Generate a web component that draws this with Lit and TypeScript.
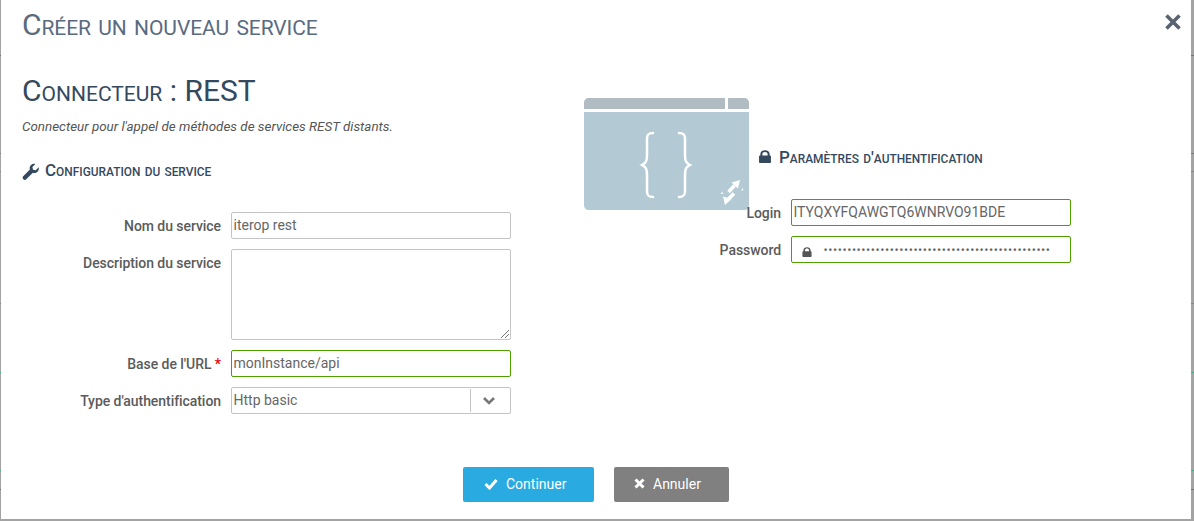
import { LitElement, html, css, svg } from "lit";
import { customElement } from "lit/decorators.js";

const lockIcon = (c: string, w: number, h: number) => svg`<svg width=${w} height=${h} viewBox="0 0 11 12"><path fill=${c} d="M1.2 5V3.8C1.2 1.6 3 .2 5.5.2s4.3 1.4 4.3 3.6V5h.2c.6 0 1 .4 1 1v5c0 .6-.4 1-1 1H1c-.6 0-1-.4-1-1V6c0-.6.4-1 1-1zm1.9 0h4.800V3.8c0-1.200-1-2-2.400-2s-2.400.8-2.400 2z"/></svg>`;

/* Synthesised small caps: lower-case runs are uppercased at 70% of the size. */
const sc = (t: string) =>
  t.split(/([^A-ZÀ-Ý :']+)/).map((part, i) => (i % 2 ? html`<span class="sm">${part}</span>` : part));

@customElement("app-root")
export class AppRoot extends LitElement {
  static styles = css`
    :host { display: block; width: 1194px; height: 521px; overflow: hidden; font-family: Roboto, "Liberation Sans", sans-serif; box-sizing: border-box; padding: 0 3px 2px 1px;
      background: linear-gradient(#a3a3a3 55px, #5d7a8a 55px, #5d7a8a 56px, #a3a3a3 56px, #a3a3a3 153px, #4f86a8 153px, #4f86a8 154px, #a3a3a3 154px, #a3a3a3 171px, #5f9a8a 171px, #5f9a8a 172px, #a3a3a3 172px, #a3a3a3 303px, #5f9a8a 303px, #5f9a8a 304px, #a3a3a3 304px, #a3a3a3 372px, #4fa58a 372px, #4fa58a 373px, #a3a3a3 373px, #a3a3a3 470px, #4fa58a 470px, #4fa58a 471px, #a3a3a3 471px, #a3a3a3 489px, #a05a6a 489px, #a05a6a 490px, #a3a3a3 490px); }
    * { box-sizing: border-box; }
    .sm { font-size: 70%; text-transform: uppercase; }
    .modal { position: relative; height: 519px; background: #fff; display: flex; flex-direction: column; }
    .close { position: absolute; right: 9px; top: 13px; width: 18px; height: 18px; display: block; }
    h1 { margin: 0; padding: 7px 0 0 21px; height: 68px; font-weight: 400; font-size: 30px; line-height: 36px; color: #5a6b80; letter-spacing: -.08px; }
    .cols { flex: 1; display: flex; }
    .left { width: 583px; padding-left: 21px; }
    .right { position: relative; flex: 1; }
    h2 { margin: 0; height: 46px; font-weight: 400; font-size: 30px; line-height: 46px; color: #34495e; }
    .desc { margin: 5px 0 0; font-size: 13.4px; line-height: 16px; font-style: italic; color: #555; }
    h3 { margin: 0; font-size: 17px; line-height: 20px; font-weight: 500; color: #34495e; display: flex; align-items: center; }
    .cfg { margin-top: 25px; gap: 6px; }
    .rows { margin-top: 30px; margin-left: -21px; display: grid; grid-template-columns: 220px 280px; column-gap: 10px; row-gap: 10px; }
    label { text-align: right; font-size: 14px; font-weight: 500; color: #5b5b5b; line-height: 28px; height: 27px; white-space: nowrap; letter-spacing: -.06px; }
    .req { color: #e00; }
    .field { height: 27px; border: 1px solid #c4c4c4; border-radius: 2px; padding: 0 1.5px; font-size: 14px; line-height: 25px; color: #666; background: #fff; }
    .ok { border-color: #4e9f00; }
    .area { height: 91px; position: relative; }
    .grip { position: absolute; right: 0; bottom: 0; }
    .sel { display: flex; padding-right: 0; }
    .sel span:first-child { flex: 1; }
    .arrow { width: 40px; margin: 1px 0; border-left: 1px solid #c4c4c4; padding-right: 4px; display: flex; align-items: center; justify-content: center; }
    .logo { position: absolute; left: 0; top: 30px; }
    .auth { padding: 79px 0 0 175px; gap: 8px; height: 131px; align-items: flex-start; }
    .auth svg { margin-top: 3px; }
    .rows2 { margin: 0; display: grid; grid-template-columns: 197px 280px; column-gap: 10px; row-gap: 10px; position: relative; }
    .pw { display: flex; align-items: center; padding-left: 10px; gap: 12px; }
    .pw svg { margin-top: 4px; }
    .dots { font-size: 9px; letter-spacing: 1.58px; line-height: 20px; color: #666; font-family: "Liberation Sans", sans-serif; font-weight: 700; white-space: nowrap; }
    .actions { height: 52px; display: flex; justify-content: center; gap: 20px; }
    .btn { height: 35px; border-radius: 2px; color: #fff; font-size: 14px; display: flex; align-items: center; padding-bottom: 2px; }
    .go { width: 131px; background: #29abe2; padding-left: 21px; gap: 8px; }
    .no { width: 115px; background: #808080; padding-left: 20px; gap: 8px; }
  `;

  render() {
    return html`<div class="modal">
      <svg class="close" viewBox="0 0 18 18"><path d="M2.500 2.500l13 13M15.500 2.500l-13 13" stroke="#5a6470" stroke-width="3.600"/></svg>
      <h1>${sc("Créer un nouveau service")}</h1>
      <div class="cols">
        <div class="left">
          <h2>${sc("Connecteur : REST")}</h2>
          <p class="desc">Connecteur pour l'appel de méthodes de services REST distants.</p>
          <h3 class="cfg">
            <svg width="17" height="17" viewBox="0 0 17 17"><path fill="#34495e" d="M1.200 13.200l6.700-6.600c-.5-1.700-.1-3.400 1.100-4.600C10.200.9 11.800.5 13.400 1l-3 3 .6 2.700 2.700.6 3-3c.4 1.600 0 3.200-1.200 4.400-1.200 1.200-2.900 1.600-4.600 1.100L4.200 16.300c-.8.8-2.100.8-2.900 0-.9-.8-.9-2.200-.1-3.100z"/></svg>
            <span>${sc("Configuration du service")}</span>
          </h3>
          <div class="rows">
            <label>Nom du service</label><div class="field">iterop rest</div>
            <label>Description du service</label>
            <div class="field area"><svg class="grip" width="10" height="10" viewBox="0 0 10 10"><path d="M1 9L9 1M5 9l4-4" stroke="#777" fill="none"/></svg></div>
            <label>Base de l'URL <span class="req">*</span></label><div class="field ok">monInstance/api</div>
            <label>Type d'authentification</label>
            <div class="field sel"><span>Http basic</span><span class="arrow"><svg width="14" height="10" viewBox="0 0 14 10"><path d="M2 2l5 5 5-5" stroke="#777" stroke-width="2.600" fill="none"/></svg></span></div>
          </div>
        </div>
        <div class="right">
          <svg class="logo" width="165" height="112" viewBox="0 0 165 112">
            <path fill="#b1bcc2" d="M0 11V5c0-3 2-5 5-5h136v11zM144 0h16c3 0 5 2 5 5v6h-21z"/>
            <path fill="#b3cad4" d="M0 14h165v93c0 3-2 5-5 5H5c-3 0-5-2-5-5z"/>
            <path fill="none" stroke="#fff" stroke-width="2.500" stroke-linecap="round" d="M69 35c-5 0-6 2-6 6v16c0 6-1 8-5 10 4 2 5 4 5 10v16c0 4 1 6 6 6M95 35c5 0 6 2 6 6v16c0 6 1 8 5 10-4 2-5 4-5 10v16c0 4-1 6-6 6"/>
            <path fill="#fff" d="M147.500 84.500L156 82l-2 8.500zM141 107l-2-8.500 8.500 2.500z"/>
            <path fill="none" stroke="#fff" stroke-width="3.600" d="M150.500 87.500L144.500 94M143.500 102l6.500-6.500"/>
            <path fill="#fff" d="M136.500 96l2-2.500.5 2.500zM158 90l1.500 2-2 1z"/>
          </svg>
          <h3 class="auth">${lockIcon("#34495e", 12, 13)}<span>${sc("Paramètres d'authentification")}</span></h3>
          <div class="rows2">
            <label>Login</label><div class="field ok">ITYQXYFQAWGTQ6WNRVO91BDE</div>
            <label>Password</label>
            <div class="field ok pw">${lockIcon("#555", 10, 10)}<span class="dots">${"•".repeat(48)}</span></div>
          </div>
        </div>
      </div>
      <div class="actions">
        <div class="btn go"><svg width="14" height="12" viewBox="0 0 14 12"><path d="M1.500 6l4 4 7-8" stroke="#fff" stroke-width="3" fill="none"/></svg>Continuer</div>
        <div class="btn no"><svg width="11" height="11" viewBox="0 0 11 11"><path d="M1.500 1.500l8 8M9.500 1.500l-8 8" stroke="#fff" stroke-width="3"/></svg>Annuler</div>
      </div>
    </div>`;
  }
}
